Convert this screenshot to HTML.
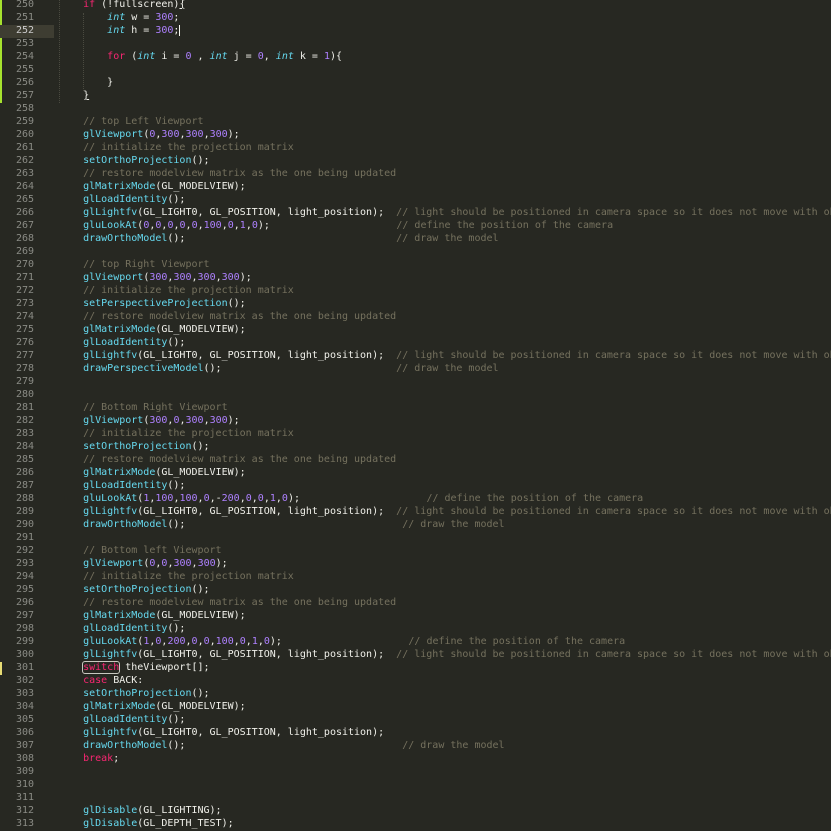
<!DOCTYPE html>
<html><head><meta charset="utf-8"><style>
html,body{margin:0;padding:0;background:#272822;width:831px;height:825px;overflow:hidden}
#g{position:absolute;left:0;top:-1px;width:54px}
#g div{height:13px;line-height:13px;font:10px "DejaVu Sans Mono",monospace;color:#8a8b85;text-align:right;padding-right:20px;box-sizing:border-box;width:54px}
#c{position:absolute;left:59px;top:-1px}
#c div{height:13px;line-height:13px;font:10px "DejaVu Sans Mono",monospace;color:#f0f0ea;white-space:pre}
.f{color:#66d9ef}.n{color:#ae81ff}.k{color:#f92672}.c{color:#75715e}.t{color:#66d9ef;font-style:italic}
.bar{position:absolute;left:0;width:2px}
.guide{position:absolute;border-left:1px dotted #4a4a40;width:0}
</style></head><body>
<div class="bar" style="top:0;height:103px;background:#a6e22e"></div>
<div class="bar" style="top:662px;height:13px;background:#e6db74"></div>
<div style="position:absolute;left:0;top:25px;width:54px;height:13px;background:#3e3d32"></div>
<div class="guide" style="left:59px;top:0;height:103px"></div>
<div class="guide" style="left:83px;top:13px;height:78px"></div>
<div id="g">
<div>250</div><div>251</div><div style="color:#ccc">252</div><div>253</div><div>254</div><div>255</div><div>256</div><div>257</div><div>258</div><div>259</div><div>260</div><div>261</div><div>262</div><div>263</div><div>264</div><div>265</div><div>266</div><div>267</div><div>268</div><div>269</div><div>270</div><div>271</div><div>272</div><div>273</div><div>274</div><div>275</div><div>276</div><div>277</div><div>278</div><div>279</div><div>280</div><div>281</div><div>282</div><div>283</div><div>284</div><div>285</div><div>286</div><div>287</div><div>288</div><div>289</div><div>290</div><div>291</div><div>292</div><div>293</div><div>294</div><div>295</div><div>296</div><div>297</div><div>298</div><div>299</div><div>300</div><div>301</div><div>302</div><div>303</div><div>304</div><div>305</div><div>306</div><div>307</div><div>308</div><div>309</div><div>310</div><div>311</div><div>312</div><div>313</div>
</div>
<div id="c">
<div>    <span class="k">if</span> (!fullscreen)<u>{</u></div>
<div>        <span class="t">int</span> w = <span class="n">300</span>;</div>
<div>        <span class="t">int</span> h = <span class="n">300</span>;<span style="border-left:1px solid #f8f8f0"></span></div>
<div></div>
<div>        <span class="k">for</span> (<span class="t">int</span> i = <span class="n">0</span> , <span class="t">int</span> j = <span class="n">0</span>, <span class="t">int</span> k = <span class="n">1</span>){</div>
<div></div>
<div>        }</div>
<div>    <u>}</u></div>
<div></div>
<div>    <span class="c">// top Left Viewport</span></div>
<div>    <span class="f">glViewport</span>(<span class="n">0</span>,<span class="n">300</span>,<span class="n">300</span>,<span class="n">300</span>);</div>
<div>    <span class="c">// initialize the projection matrix</span></div>
<div>    <span class="f">setOrthoProjection</span>();</div>
<div>    <span class="c">// restore modelview matrix as the one being updated</span></div>
<div>    <span class="f">glMatrixMode</span>(GL_MODELVIEW);</div>
<div>    <span class="f">glLoadIdentity</span>();</div>
<div>    <span class="f">glLightfv</span>(GL_LIGHT0, GL_POSITION, light_position);  <span class="c">// light should be positioned in camera space so it does not move with object</span></div>
<div>    <span class="f">gluLookAt</span>(<span class="n">0</span>,<span class="n">0</span>,<span class="n">0</span>,<span class="n">0</span>,<span class="n">0</span>,<span class="n">100</span>,<span class="n">0</span>,<span class="n">1</span>,<span class="n">0</span>);                     <span class="c">// define the position of the camera</span></div>
<div>    <span class="f">drawOrthoModel</span>();                                   <span class="c">// draw the model</span></div>
<div></div>
<div>    <span class="c">// top Right Viewport</span></div>
<div>    <span class="f">glViewport</span>(<span class="n">300</span>,<span class="n">300</span>,<span class="n">300</span>,<span class="n">300</span>);</div>
<div>    <span class="c">// initialize the projection matrix</span></div>
<div>    <span class="f">setPerspectiveProjection</span>();</div>
<div>    <span class="c">// restore modelview matrix as the one being updated</span></div>
<div>    <span class="f">glMatrixMode</span>(GL_MODELVIEW);</div>
<div>    <span class="f">glLoadIdentity</span>();</div>
<div>    <span class="f">glLightfv</span>(GL_LIGHT0, GL_POSITION, light_position);  <span class="c">// light should be positioned in camera space so it does not move with object</span></div>
<div>    <span class="f">drawPerspectiveModel</span>();                             <span class="c">// draw the model</span></div>
<div></div>
<div></div>
<div>    <span class="c">// Bottom Right Viewport</span></div>
<div>    <span class="f">glViewport</span>(<span class="n">300</span>,<span class="n">0</span>,<span class="n">300</span>,<span class="n">300</span>);</div>
<div>    <span class="c">// initialize the projection matrix</span></div>
<div>    <span class="f">setOrthoProjection</span>();</div>
<div>    <span class="c">// restore modelview matrix as the one being updated</span></div>
<div>    <span class="f">glMatrixMode</span>(GL_MODELVIEW);</div>
<div>    <span class="f">glLoadIdentity</span>();</div>
<div>    <span class="f">gluLookAt</span>(<span class="n">1</span>,<span class="n">100</span>,<span class="n">100</span>,<span class="n">0</span>,-<span class="n">200</span>,<span class="n">0</span>,<span class="n">0</span>,<span class="n">1</span>,<span class="n">0</span>);                     <span class="c">// define the position of the camera</span></div>
<div>    <span class="f">glLightfv</span>(GL_LIGHT0, GL_POSITION, light_position);  <span class="c">// light should be positioned in camera space so it does not move with object</span></div>
<div>    <span class="f">drawOrthoModel</span>();                                    <span class="c">// draw the model</span></div>
<div></div>
<div>    <span class="c">// Bottom left Viewport</span></div>
<div>    <span class="f">glViewport</span>(<span class="n">0</span>,<span class="n">0</span>,<span class="n">300</span>,<span class="n">300</span>);</div>
<div>    <span class="c">// initialize the projection matrix</span></div>
<div>    <span class="f">setOrthoProjection</span>();</div>
<div>    <span class="c">// restore modelview matrix as the one being updated</span></div>
<div>    <span class="f">glMatrixMode</span>(GL_MODELVIEW);</div>
<div>    <span class="f">glLoadIdentity</span>();</div>
<div>    <span class="f">gluLookAt</span>(<span class="n">1</span>,<span class="n">0</span>,<span class="n">200</span>,<span class="n">0</span>,<span class="n">0</span>,<span class="n">100</span>,<span class="n">0</span>,<span class="n">1</span>,<span class="n">0</span>);                     <span class="c">// define the position of the camera</span></div>
<div>    <span class="f">glLightfv</span>(GL_LIGHT0, GL_POSITION, light_position);  <span class="c">// light should be positioned in camera space so it does not move with object</span></div>
<div>    <span class="k" style="outline:1px solid #c8c8c0;border-radius:2px">switch</span> theViewport[];</div>
<div>    <span class="k">case</span> BACK:</div>
<div>    <span class="f">setOrthoProjection</span>();</div>
<div>    <span class="f">glMatrixMode</span>(GL_MODELVIEW);</div>
<div>    <span class="f">glLoadIdentity</span>();</div>
<div>    <span class="f">glLightfv</span>(GL_LIGHT0, GL_POSITION, light_position);</div>
<div>    <span class="f">drawOrthoModel</span>();                                    <span class="c">// draw the model</span></div>
<div>    <span class="k">break</span>;</div>
<div></div>
<div></div>
<div></div>
<div>    <span class="f">glDisable</span>(GL_LIGHTING);</div>
<div>    <span class="f">glDisable</span>(GL_DEPTH_TEST);</div>
</div>
</body></html>
